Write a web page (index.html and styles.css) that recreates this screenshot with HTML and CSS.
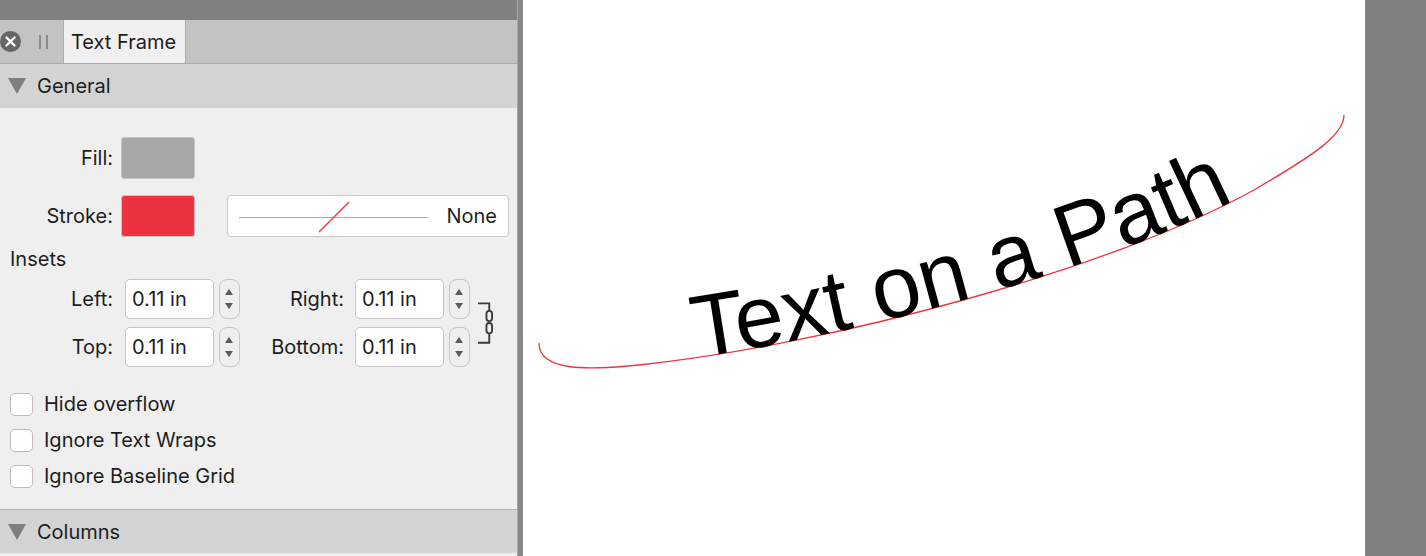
FILE: index.html
```html
<!DOCTYPE html>
<html lang="en">
<head>
    <meta charset="UTF-8">
    <title>Text Frame</title>
    <link rel="stylesheet" href="styles.css">
</head>
<body>
    <div class="panel">
        <div class="tabs">
            <span class="tab-close">
                <svg width="21" height="21" viewBox="0 0 21 21"><circle cx="10.5" cy="10.5" r="10.5" fill="#666"/><path d="M6.5 6.5l8 8M14.5 6.5l-8 8" stroke="#fff" stroke-width="2.4" stroke-linecap="round"/></svg>
            </span>
            <span class="tab-grip"></span>
            <span class="tab active">Text Frame</span>
        </div>

        <div class="section-head">
            <span class="disclosure"></span>
            General
        </div>

        <div class="section-body">
            <div class="swatch-row">
                <span class="lab">Fill:</span>
                <span class="swatch fill"></span>
            </div>
            <div class="swatch-row">
                <span class="lab">Stroke:</span>
                <span class="swatch stroke"></span>
                <span class="stroke-style">
                    <svg class="stroke-preview" width="190" height="32" viewBox="0 0 190 32">
                        <line x1="0" y1="16.5" x2="189" y2="16.5" stroke="#a9a9a9" stroke-width="1"/>
                        <line x1="80" y1="31" x2="110" y2="1" stroke="#ee3340" stroke-width="1.2"/>
                    </svg>
                    <span class="stroke-name">None</span>
                </span>
            </div>

            <div class="group-title">Insets</div>
            <div class="insets">
                <span class="lab">Left:</span>
                <span class="field">0.11 in</span>
                <span class="stepper-cell"><span class="stepper"></span></span>
                <span class="lab second">Right:</span>
                <span class="field">0.11 in</span>
                <span class="stepper-cell"><span class="stepper"></span></span>
                <span class="link">
                    <svg width="16" height="44" viewBox="0 0 16 44">
                        <g fill="none" stroke="#3b3b3b" stroke-width="2">
                            <path d="M0 1H12V9"/>
                            <rect x="9" y="9" width="6" height="11" rx="3"/>
                            <rect x="9" y="22" width="6" height="11" rx="3"/>
                            <path d="M12 33V43H0"/>
                        </g>
                    </svg>
                </span>
                <span class="lab">Top:</span>
                <span class="field">0.11 in</span>
                <span class="stepper-cell"><span class="stepper"></span></span>
                <span class="lab second">Bottom:</span>
                <span class="field">0.11 in</span>
                <span class="stepper-cell"><span class="stepper"></span></span>
            </div>

            <div class="checks">
                <label class="check"><span class="box"></span>Hide overflow</label>
                <label class="check"><span class="box"></span>Ignore Text Wraps</label>
                <label class="check"><span class="box"></span>Ignore Baseline Grid</label>
            </div>
        </div>

        <div class="section-head closed-head">
            <span class="disclosure"></span>
            Columns
        </div>
        <div class="panel-foot"></div>
    </div>

    <div class="gutter"></div>

    <div class="canvas">
        <svg width="842" height="556" viewBox="524 0 842 556">
            <path id="curve" d="M540 343C540 372 590 370 640 365C830 345 1110 270 1255 190C1315 155 1345 135 1345 115" fill="none" stroke="#ee3340" stroke-width="1.3"/>
            <text class="path-text"><textPath href="#curve" startOffset="170">Text on a Path</textPath></text>
        </svg>
    </div>

    <div class="dock"></div>
</body>
</html>
```

FILE: styles.css
```css
* {
    box-sizing: border-box;
}
body {
    margin: 0;
    height: 556px;
    display: flex;
    overflow: hidden;
    background: #808080;
    font-family: Inter, "Noto Sans", sans-serif;
    font-size: 20px;
    color: #1d1d1d;
}

/* inspector panel */
.panel {
    width: 518px;
    padding-top: 20px;
    display: flex;
    flex-direction: column;
    border-right: 1px solid #a7a7a7;
}
.tabs {
    height: 44px;
    display: flex;
    align-items: center;
    background: #c3c3c3;
    border-bottom: 1px solid #a9a9a9;
}
.tab-close {
    display: flex;
    width: 21px;
    height: 21px;
}
.tab-grip {
    width: 9px;
    height: 14px;
    margin-left: 18px;
    border-left: 2px solid #8c8c8c;
    border-right: 2px solid #8c8c8c;
}
.tab {
    align-self: stretch;
    display: flex;
    align-items: center;
    margin-left: 15px;
    padding: 0 9px 0 7px;
    background: #f0f0f0;
    border-left: 1px solid #adadad;
    border-right: 1px solid #adadad;
}
.section-head {
    height: 44px;
    flex: none;
    display: flex;
    align-items: center;
    padding-left: 8px;
    background: #d3d3d3;
}
.closed-head {
    border-top: 1px solid #b4b4b4;
}
.disclosure {
    width: 0;
    height: 0;
    margin-right: 11px;
    border-left: 9.5px solid transparent;
    border-right: 9.5px solid transparent;
    border-top: 16px solid #7f7f7f;
}
.section-body {
    flex: 1;
    background: #efefef;
    padding-top: 29px;
}
.panel-foot {
    height: 3px;
    background: #efefef;
}

.swatch-row {
    display: flex;
    align-items: center;
    height: 42px;
    margin-bottom: 16px;
}
.lab {
    width: 113px;
    margin-right: 8px;
    text-align: right;
}
.swatch {
    width: 74px;
    height: 42px;
    border: 1px solid #c5c5c5;
    border-radius: 3px;
}
.fill {
    background: #a8a8a8;
}
.stroke {
    background: #ee3340;
}
.stroke-style {
    width: 282px;
    height: 42px;
    margin-left: 32px;
    display: flex;
    align-items: center;
    padding: 0 11px;
    background: #fff;
    border: 1px solid #c8c8c8;
    border-radius: 4px;
}
.stroke-preview {
    margin-top: 1px;
}
.stroke-name {
    margin-left: auto;
}

.group-title {
    height: 24px;
    margin: -6px 0 8px 10px;
    line-height: 24px;
}

/* insets grid: label, field, stepper twice, then the link bracket */
.insets {
    display: grid;
    grid-template-columns: 125px 89px 26px 115px 89px 26px 23px;
    grid-template-rows: 40px 40px;
    row-gap: 8px;
    align-items: center;
}
.insets .lab {
    width: auto;
    margin: 0;
    padding-right: 12px;
}
.insets .lab.second {
    padding-right: 11px;
}
.field {
    height: 40px;
    display: flex;
    align-items: center;
    padding-left: 6px;
    background: #fff;
    border: 1px solid #c6c6c6;
    border-radius: 5px;
}
.stepper-cell {
    padding-left: 5px;
}
.stepper {
    display: block;
    width: 21px;
    height: 40px;
    border: 1px solid #c6c6c6;
    border-radius: 8px;
    background: #efefef;
    position: relative;
}
.stepper::before,
.stepper::after {
    content: "";
    position: absolute;
    left: 5px;
    border-left: 4.5px solid transparent;
    border-right: 4.5px solid transparent;
}
.stepper::before {
    top: 9px;
    border-bottom: 6px solid #5a5a5a;
}
.stepper::after {
    bottom: 9px;
    border-top: 6px solid #5a5a5a;
}
.link {
    grid-column: 7;
    grid-row: 1 / span 2;
    padding-left: 8px;
    display: flex;
}

.checks {
    margin-top: 19px;
}
.check {
    height: 36px;
    display: flex;
    align-items: center;
    padding-left: 10px;
}
.box {
    width: 23px;
    height: 23px;
    margin-right: 11px;
    background: #fff;
    border: 1px solid #bdbdbd;
    border-radius: 5px;
}

/* document area */
.gutter {
    width: 5px;
    background: #878787;
}
.canvas {
    width: 842px;
    background: #fff;
}
.canvas svg {
    display: block;
}
.path-text {
    font-family: "Liberation Sans", Arial, sans-serif;
    font-size: 88px;
    fill: #000;
}
.dock {
    flex: 1;
    background: #808080;
    border-left: 1px solid #8a8a8a;
}
```
